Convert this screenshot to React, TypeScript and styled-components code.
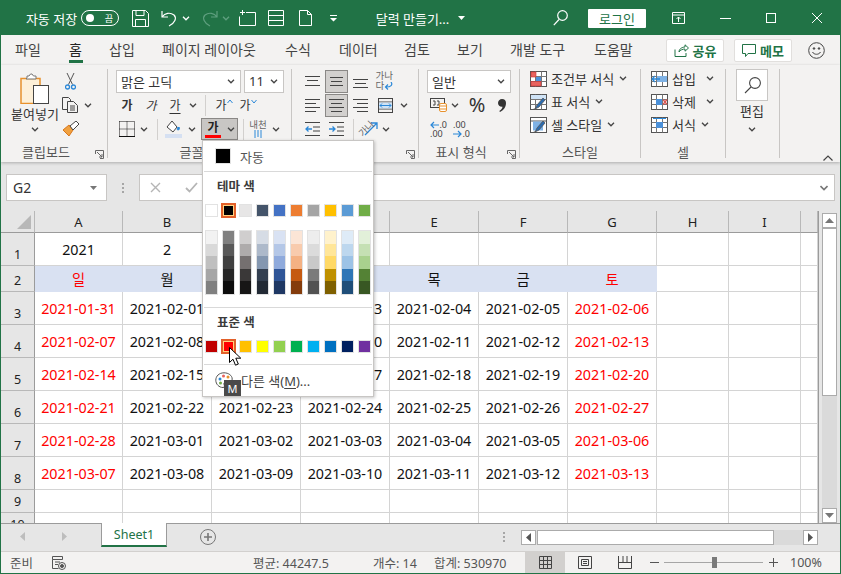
import React from "react";
import styled, { createGlobalStyle } from "styled-components";

const GREEN = "#217346";
const INK = "#444";
const BLUE = "#2b88d8";
const FONT = `"Noto Sans", "Noto Sans CJK KR", sans-serif`;

const COLUMNS = ["A", "B", "C", "D", "E", "F", "G", "H", "I", ""];
const ROW_NUMBERS = [1, 2, 3, 4, 5, 6, 7, 8, 9, 10];
const WEEK_DAYS = ["일", "월", "화", "수", "목", "금", "토"];

const THEME_COLORS = ["#ffffff", "#000000", "#e7e6e6", "#44546a", "#4472c4", "#ed7d31", "#a5a5a5", "#ffc000", "#5b9bd5", "#70ad47"];
const THEME_SHADES = [
  ["#f2f2f2", "#d9d9d9", "#bfbfbf", "#a6a6a6", "#808080"],
  ["#808080", "#595959", "#404040", "#262626", "#0d0d0d"],
  ["#d0cece", "#aeabab", "#757070", "#3a3838", "#171616"],
  ["#d6dce5", "#adb9ca", "#8497b0", "#333f50", "#222a35"],
  ["#d9e2f3", "#b4c7e7", "#8faadc", "#2f5597", "#1f3864"],
  ["#fbe5d6", "#f8cbad", "#f4b183", "#c55a11", "#843c0c"],
  ["#ededed", "#dbdbdb", "#c9c9c9", "#7b7b7b", "#525252"],
  ["#fff2cc", "#ffe699", "#ffd966", "#bf9000", "#7f6000"],
  ["#deebf7", "#bdd7ee", "#9dc3e6", "#2e75b6", "#1f4e79"],
  ["#e2f0d9", "#c5e0b4", "#a9d18e", "#548235", "#385723"],
];
const STANDARD_COLORS = ["#c00000", "#ff0000", "#ffc000", "#ffff00", "#92d050", "#00b050", "#00b0f0", "#0070c0", "#002060", "#7030a0"];

const dateAt = (week: number, day: number) =>
  new Date(Date.UTC(2021, 0, 31 + week * 7 + day)).toISOString().slice(0, 10);

const cellContent = (row: number, col: number): { text: string; red?: boolean; fill?: boolean } => {
  if (row === 1) return { text: col === 0 ? "2021" : col === 1 ? "2" : "" };
  if (row === 2) return col < 7 ? { text: WEEK_DAYS[col], red: col === 0 || col === 6, fill: true } : { text: "" };
  if (row <= 8 && col < 7) return { text: dateAt(row - 3, col), red: col === 0 || col === 6 };
  return { text: "" };
};

const GlobalStyle = createGlobalStyle`
  html, body { margin: 0; padding: 0; background: #fff; }
  * { box-sizing: border-box; }
`;

const Window = styled.div`
  position: relative;
  display: flex;
  flex-direction: column;
  width: 841px;
  height: 574px;
  border: 1px solid ${GREEN};
  overflow: hidden;
  background: #e6e6e6;
  font-family: ${FONT};
  color: ${INK};
`;

/* title bar */
const TitleBar = styled.div`
  display: flex;
  align-items: center;
  flex: none;
  height: 34px;
  background: ${GREEN};
  color: #fff;
  font-size: 13px;
  white-space: nowrap;
`;

const TitleSlot = styled.span<{ $w: number }>`
  display: inline-flex;
  align-items: center;
  justify-content: center;
  flex: none;
  width: ${(p) => p.$w}px;
`;

const Toggle = styled.span`
  position: relative;
  display: inline-flex;
  align-items: center;
  justify-content: flex-end;
  width: 38px;
  height: 16px;
  padding-right: 5px;
  border: 1px solid #fff;
  border-radius: 8px;
  font-size: 9px;
  &::before {
    content: "";
    position: absolute;
    left: 4px;
    top: 3px;
    width: 8px;
    height: 8px;
    border-radius: 50%;
    background: #fff;
  }
`;

const LoginButton = styled.span`
  display: flex;
  align-items: center;
  justify-content: center;
  width: 58px;
  height: 19px;
  background: #fff;
  color: ${GREEN};
  font-size: 13px;
  border-radius: 1px;
`;

/* tabs */
const TabRow = styled.div`
  display: flex;
  align-items: center;
  flex: none;
  height: 30px;
  padding: 0 15px 0 14px;
  background: #f3f2f1;
`;

const TabList = styled.div`
  display: grid;
  grid-template-columns: 54px 40px 53px 123px 54px 65px 53px 53px 84px 50px;
  font-size: 14px;
  line-height: 20px;
`;

const Tab = styled.span<{ $active?: boolean }>`
  position: relative;
  white-space: nowrap;
  color: ${(p) => (p.$active ? "#222" : INK)};
  ${(p) =>
    p.$active &&
    `&::after {
      content: "";
      position: absolute;
      left: 0;
      top: 20px;
      width: 14px;
      height: 3px;
      background: ${GREEN};
    }`}
`;

const TabActions = styled.div`
  display: flex;
  align-items: center;
  gap: 10px;
  margin-left: auto;
`;

const ActionButton = styled.span`
  display: flex;
  align-items: center;
  justify-content: center;
  gap: 4px;
  width: 58px;
  height: 23px;
  background: #fff;
  border: 1px solid #e1dfdd;
  border-radius: 2px;
  color: ${GREEN};
  font-size: 13px;
  font-weight: 700;
`;

const SmileSlot = styled.span`
  display: flex;
  margin-left: 6px;
`;

/* ribbon */
const Ribbon = styled.div`
  position: relative;
  z-index: 1;
  display: flex;
  flex: none;
  height: 97px;
  padding: 4px 0;
  background: #f3f2f1;
  box-shadow: 0 1px 3px rgba(0, 0, 0, 0.25);
`;

const Group = styled.div<{ $w: number }>`
  position: relative;
  display: flex;
  flex-direction: column;
  flex: none;
  width: ${(p) => p.$w}px;
  border-right: 1px solid #c8c6c4;
`;

const GroupBody = styled.div<{ $pl: number }>`
  display: flex;
  flex: none;
  height: 71px;
  padding-left: ${(p) => p.$pl}px;
`;

const Stack = styled.div<{ $mt?: number }>`
  display: flex;
  flex-direction: column;
  margin-top: ${(p) => p.$mt ?? 0}px;
`;

const GroupLabel = styled.div<{ $launcher?: boolean }>`
  height: 18px;
  padding: 3px ${(p) => (p.$launcher ? 16 : 0)}px 0 0;
  text-align: center;
  font-size: 13px;
  line-height: 18px;
  color: #555;
  white-space: nowrap;
`;

const Launcher = styled.span`
  position: absolute;
  right: 3px;
  bottom: -1px;
  display: flex;
`;

const Row = styled.div<{ $h?: number }>`
  display: flex;
  align-items: center;
  flex: none;
  height: ${(p) => p.$h ?? 24}px;
  font-size: 13px;
  white-space: nowrap;
`;

const Cell = styled.span<{ $w: number }>`
  display: inline-flex;
  align-items: center;
  justify-content: center;
  flex: none;
  width: ${(p) => p.$w}px;
  height: 100%;
`;

const Divider = styled.span`
  display: block;
  width: 1px;
  height: 21px;
  background: #d2d0ce;
`;

const ComboBox = styled.span<{ $w: number }>`
  display: flex;
  align-items: center;
  justify-content: space-between;
  width: ${(p) => p.$w}px;
  height: 23px;
  margin-right: 3px;
  padding: 0 5px 0 4px;
  background: #fff;
  border: 1px solid #c8c6c4;
  font-size: 13px;
  color: #333;
`;

const Letter = styled.span<{ $italic?: boolean; $under?: boolean; $bold?: boolean }>`
  font-size: 12px;
  color: #333;
  font-weight: ${(p) => (p.$bold ? 700 : 400)};
  font-style: ${(p) => (p.$italic ? "italic" : "normal")};
  text-decoration: ${(p) => (p.$under ? "underline" : "none")};
  text-underline-offset: 3px;
`;

const ActiveColorButton = styled.span`
  display: flex;
  align-items: center;
  flex: none;
  width: 37px;
  height: 22px;
  padding-left: 3px;
  background: #c8c6c4;
  border: 1px solid #8a8886;
`;

const ColorLetter = styled.span`
  display: flex;
  flex-direction: column;
  align-items: center;
  width: 16px;
  font-size: 12px;
  font-weight: 700;
  line-height: 13px;
  color: #222;
  &::after {
    content: "";
    width: 16px;
    height: 3px;
    margin-top: 1px;
    background: #ff0000;
  }
`;

const ColorChevron = styled.span`
  display: flex;
  margin-left: 6px;
`;

const AlignButton = styled.span<{ $on?: boolean }>`
  display: flex;
  align-items: center;
  justify-content: center;
  width: 23px;
  height: 23px;
  ${(p) => p.$on && "background: #d2d0ce; border: 1px solid #8a8886;"}
`;

const TinyText = styled.span`
  font-size: 9.5px;
  line-height: 10px;
  color: #666;
`;

const WrapIcon = styled.span`
  display: flex;
  flex-direction: column;
  width: 19px;
`;

const WrapLine = styled.span`
  display: flex;
  align-items: center;
  height: 10px;
`;

const OrientText = styled(TinyText)`
  display: block;
  flex: none;
  transform: rotate(-45deg);
  margin-right: -11px;
`;

const OrientIcon = styled.span`
  display: flex;
  align-items: center;
  width: 23px;
`;

const PhoneticIcon = styled.span`
  display: flex;
  flex-direction: column;
  align-items: center;
`;

const Percent = styled.span`
  font-size: 20px;
  line-height: 24px;
  color: #333;
`;

const DecimalIcon = styled.span`
  display: flex;
  flex-direction: column;
  width: 17px;
`;

const DecimalLine = styled.span`
  display: flex;
  align-items: center;
  justify-content: space-between;
  height: 9px;
  font-size: 9px;
  line-height: 9px;
  color: #444;
`;

const StyleItem = styled(Row)<{ $gap?: number }>`
  height: 23px;
  gap: 4px;
  color: #333;
  & > svg:last-child {
    margin-left: ${(p) => p.$gap ?? 1}px;
  }
`;

const PasteLabel = styled.span`
  font-size: 13px;
  line-height: 20px;
  color: #333;
`;

const PasteColumn = styled.div`
  display: flex;
  flex-direction: column;
  align-items: center;
  flex: none;
  width: 52px;
  padding-top: 4px;
`;

const PasteChevron = styled.span`
  display: flex;
  margin-top: 3px;
`;

const SearchBox = styled.span`
  display: flex;
  align-items: center;
  justify-content: center;
  width: 32px;
  height: 32px;
  background: #fff;
  border: 1px solid #c8c6c4;
`;

const EditColumn = styled.div`
  display: flex;
  flex-direction: column;
  align-items: center;
  width: 32px;
  font-size: 13px;
  line-height: 20px;
  color: #333;
`;

const EditChevron = styled.span`
  display: flex;
  margin-top: 6px;
`;

const Collapse = styled.span`
  position: absolute;
  right: 7px;
  bottom: 1px;
  display: flex;
`;

/* formula bar */
const FormulaBar = styled.div`
  display: flex;
  align-items: flex-start;
  flex: none;
  height: 49px;
  padding: 12px 5px 0 5px;
`;

const NameBox = styled.div`
  display: flex;
  align-items: center;
  justify-content: space-between;
  flex: none;
  width: 101px;
  height: 27px;
  padding: 0 9px 0 6px;
  background: #fff;
  border: 1px solid #c8c6c4;
  font-size: 14px;
  color: #333;
`;

const Grip = styled.span`
  display: flex;
  flex-direction: column;
  align-items: center;
  justify-content: center;
  gap: 2px;
  flex: none;
  width: 32px;
  height: 27px;
  & > i {
    display: block;
    width: 2px;
    height: 2px;
    background: #a6a6a6;
  }
`;

const FormulaBox = styled.div`
  display: flex;
  align-items: center;
  flex: 1;
  height: 27px;
  background: #fff;
  border: 1px solid #c8c6c4;
  padding: 0 6px 0 10px;
`;

const FormulaMark = styled.span`
  display: flex;
  width: 35px;
`;

const FormulaExpand = styled.span`
  display: flex;
  margin-left: auto;
`;

/* sheet */
const SheetArea = styled.div`
  display: flex;
  flex: none;
  height: 312px;
`;

const Grid = styled.div`
  display: grid;
  grid-template-columns: 34px 88px repeat(6, 89px) 72px 72px 17px;
  grid-template-rows: 22px 33px 26px repeat(6, 33px) 23px 23px;
  flex: none;
  width: 818px;
  height: 312px;
  overflow: hidden;
  background: #fff;
  border-right: 1px solid #9b9b9b;
`;

const Corner = styled.div`
  position: relative;
  background: #e6e6e6;
  border-right: 1px solid #b8b8b8;
  border-bottom: 1px solid #9b9b9b;
  &::after {
    content: "";
    position: absolute;
    left: 16px;
    top: 4px;
    width: 14px;
    height: 14px;
    background: #b8b8b8;
    clip-path: polygon(100% 0, 100% 100%, 0 100%);
  }
`;

const ColHead = styled.div`
  display: flex;
  align-items: center;
  justify-content: center;
  background: #e6e6e6;
  border-right: 1px solid #b8b8b8;
  border-bottom: 1px solid #9b9b9b;
  font-size: 13px;
  color: #222;
`;

const RowHead = styled.div`
  display: flex;
  align-items: flex-end;
  justify-content: center;
  padding-bottom: 1px;
  background: #e6e6e6;
  border-right: 1px solid #9b9b9b;
  border-bottom: 1px solid #b8b8b8;
  font-size: 12.5px;
  line-height: 18px;
  color: #222;
`;

const DataCell = styled.div<{ $fill?: boolean; $red?: boolean }>`
  display: flex;
  align-items: center;
  justify-content: center;
  overflow: hidden;
  white-space: nowrap;
  font-size: 14.3px;
  color: ${(p) => (p.$red ? "#ff0000" : "#111")};
  background: ${(p) => (p.$fill ? "#d9e1f2" : "#fff")};
  border-right: 1px solid ${(p) => (p.$fill ? "#d9e1f2" : "#d4d4d4")};
  border-bottom: 1px solid ${(p) => (p.$fill ? "#d9e1f2" : "#d4d4d4")};
`;

const VScroll = styled.div`
  display: flex;
  flex-direction: column;
  flex: none;
  width: 15px;
  margin: 2px 0 0 3px;
  background: #dadada;
`;

const ScrollButton = styled.span`
  display: flex;
  align-items: center;
  justify-content: center;
  flex: none;
  width: 15px;
  height: 15px;
  background: #fff;
  border: 1px solid #ababab;
`;

const VThumb = styled.span`
  flex: none;
  height: 168px;
  background: #fff;
  border: 1px solid #ababab;
`;

const VTrack = styled.span`
  flex: 1;
`;

/* sheet tabs */
const SheetBar = styled.div`
  display: flex;
  align-items: flex-start;
  flex: none;
  height: 28px;
  background: #e6e6e6;
  border-top: 1px solid #9b9b9b;
  padding-right: 22px;
`;

const NavArrows = styled.div`
  display: flex;
  align-items: center;
  justify-content: space-around;
  flex: none;
  width: 88px;
  height: 27px;
  padding: 0 3px 2px 0;
`;

const SheetTab = styled.div`
  flex: none;
  width: 66px;
  height: 24px;
  margin: -1px 0 0 12px;
  padding-top: 3px;
  text-align: center;
  background: #fff;
  border: 1px solid #9b9b9b;
  border-top: 0;
  border-bottom: 2px solid ${GREEN};
  font-size: 12.5px;
  line-height: 18px;
  color: ${GREEN};
`;

const AddSheet = styled.span`
  display: flex;
  flex: none;
  margin: 5px 0 0 33px;
`;

const HGrip = styled(Grip)`
  width: 14px;
  height: 27px;
  margin-left: 281px;
  padding-bottom: 1px;
`;

const HScroll = styled.div`
  display: flex;
  flex: 1;
  height: 15px;
  margin: 6px 0 0 10px;
  background: #dadada;
`;

const HThumb = styled.span`
  flex: none;
  width: 237px;
  margin-left: 1px;
  background: #fff;
  border: 1px solid #ababab;
`;

/* status bar */
const StatusBar = styled.div`
  display: grid;
  grid-template-columns: 42px 201px 120px 61px 91px 40px 40px 40px 1fr;
  align-items: center;
  flex: none;
  height: 22px;
  padding-left: 9px;
  background: #f3f2f1;
  border-top: 1px solid #d2d0ce;
  font-size: 12.5px;
  color: #555;
  white-space: nowrap;
`;

const ViewButton = styled.span<{ $on?: boolean }>`
  display: flex;
  align-items: center;
  justify-content: center;
  height: 21px;
  background: ${(p) => (p.$on ? "#d2d0ce" : "transparent")};
`;

const Zoomer = styled.div`
  display: flex;
  align-items: center;
  padding-left: 5px;
`;

const SliderTrack = styled.span`
  position: relative;
  width: 99px;
  height: 1px;
  margin: 0 6px 0 5px;
  background: #a6a6a6;
  &::after {
    content: "";
    position: absolute;
    left: 48px;
    top: -5px;
    width: 5px;
    height: 11px;
    background: #7a7a7a;
  }
`;

const ZoomValue = styled.span`
  margin-left: 12px;
`;

/* colour menu, lies over the ribbon and the sheet */
const ColorMenu = styled.div`
  position: absolute;
  z-index: 5;
  left: 201px;
  top: 139px;
  width: 172px;
  height: 257px;
  background: #fff;
  border: 1px solid #c8c6c4;
  box-shadow: 1px 1px 3px rgba(0, 0, 0, 0.22);
`;

const MenuRow = styled.div`
  display: flex;
  align-items: center;
  height: 30px;
  padding-left: 12px;
  font-size: 13px;
  color: #555;
`;

const AutoSwatch = styled.span`
  display: block;
  width: 16px;
  height: 16px;
  margin-right: 9px;
  background: #000;
  border: 1px solid #e2e2e2;
`;

const MenuRule = styled.div<{ $mt?: number }>`
  height: 1px;
  margin: ${(p) => p.$mt ?? 0}px 1px 0;
  background: #d9d9d9;
`;

const MenuHeading = styled.div`
  height: 30px;
  margin-bottom: 2px;
  padding-left: 14px;
  font-size: 12.5px;
  font-weight: 700;
  line-height: 30px;
  color: #3b3b3b;
`;

const SwatchRow = styled.div`
  display: grid;
  grid-template-columns: repeat(10, 13px);
  column-gap: 4px;
  padding-left: 2px;
`;

const Swatch = styled.span<{ $color: string; $picked?: boolean }>`
  display: block;
  height: 13px;
  background: ${(p) => p.$color};
  border: 1px solid ${(p) => (p.$picked ? "#e2602a" : "#e2e2e2")};
  ${(p) => p.$picked && "box-shadow: inset 0 0 0 1px #ffd27f; outline: 1px solid #e2602a;"}
`;

const ShadeGrid = styled(SwatchRow)`
  margin-top: 13px;
`;

const ShadeColumn = styled.span`
  display: flex;
  flex-direction: column;
  height: 65px;
  border: 1px solid #e2e2e2;
`;

const Shade = styled.span<{ $color: string }>`
  flex: 1;
  background: ${(p) => p.$color};
`;

const MoreRow = styled(MenuRow)`
  gap: 8px;
  color: #444;
`;

const MoreText = styled.span`
  & > u {
    text-underline-offset: 2px;
  }
`;

const KeyTip = styled.span`
  position: absolute;
  left: 21px;
  top: 239px;
  display: flex;
  align-items: center;
  justify-content: center;
  width: 17px;
  height: 16px;
  background: #4a4a4a;
  color: #fff;
  font-size: 11px;
`;

const Pointer = styled.svg`
  position: absolute;
  left: 26px;
  top: 206px;
`;

/* icons */
const Chevron = ({ color = INK }: { color?: string }) => (
  <svg width="8" height="5" viewBox="0 0 8 5" fill="none" stroke={color} strokeWidth="1.3">
    <path d="M1 .8l3 3 3-3" />
  </svg>
);

const AlignLines = ({ lines }: { lines: [number, number, number][] }) => (
  <svg width="15" height="17" viewBox="0 0 15 17" stroke="#444" strokeWidth="1">
    {lines.map(([a, b, y]) => (
      <path key={y} d={`M${a} ${y + 0.5}H${b}`} />
    ))}
  </svg>
);

const TableBase = ({ children, lines = true }: { children?: React.ReactNode; lines?: boolean }) => (
  <svg width="17" height="16" viewBox="0 0 17 16" fill="none">
    <rect x=".5" y=".5" width="16" height="15" fill="#fff" stroke="#555" />
    {lines && <path d="M.5 5.5h16M.5 10.5h16M5.5 .5v15M11.5 .5v15" stroke="#777" />}
    {children}
  </svg>
);

const LauncherIcon = () => (
  <svg width="9" height="9" viewBox="0 0 9 9" fill="none" stroke="#666">
    <path d="M.5 4V.5h8v8H5M2 2l5 5M4 7h3V4" />
  </svg>
);

const Brush = () => <path d="M5 15l2-4 6-7 2 2-6 7zM3 15.500l3-1" fill="#2b6cb0" stroke="#555" strokeWidth=".8" />;

const Dot = () => <i />;

export default function App() {
  return (
    <>
      <GlobalStyle />
      <Window>
        <TitleBar>
          <TitleSlot $w={21} />
          <TitleSlot $w={59}>자동 저장</TitleSlot>
          <Toggle>끔</Toggle>
          <TitleSlot $w={13} />
          <TitleSlot $w={17}>
            <svg width="17" height="17" viewBox="0 0 17 17" fill="none" stroke="#fff">
              <path d="M.5.5h13l3 3v13H.5zM4 .5v5h8v-5M3.500 16.500v-7h10v7" />
            </svg>
          </TitleSlot>
          <TitleSlot $w={12} />
          <TitleSlot $w={17}>
            <svg width="17" height="17" viewBox="0 0 17 17" fill="none" stroke="#fff" strokeWidth="1.2">
              <path d="M1 1v6h6M1 7c3-4 8-5 12-2 3 3 1 8-5 11" />
            </svg>
          </TitleSlot>
          <TitleSlot $w={16}>
            <Chevron color="#fff" />
          </TitleSlot>
          <TitleSlot $w={7} />
          <TitleSlot $w={17}>
            <svg width="17" height="17" viewBox="0 0 17 17" fill="none" stroke="#5f9f7f" strokeWidth="1.2">
              <path d="M16 1v6h-6M16 7c-3-4-8-5-12-2-3 3-1 8 5 11" />
            </svg>
          </TitleSlot>
          <TitleSlot $w={15}>
            <Chevron color="#5f9f7f" />
          </TitleSlot>
          <TitleSlot $w={6} />
          <TitleSlot $w={17}>
            <svg width="17" height="16" viewBox="0 0 17 16" fill="none" stroke="#fff">
              <path d="M7 2.500h9.500v13H.5v-9M3.500 0v5M1 2.500h5" />
            </svg>
          </TitleSlot>
          <TitleSlot $w={12} />
          <TitleSlot $w={17}>
            <svg width="17" height="16" viewBox="0 0 17 16" fill="none" stroke="#fff">
              <path d="M.5.500h15v15H.5zM.5 5.500h15M.5 10.500h15" />
            </svg>
          </TitleSlot>
          <TitleSlot $w={14} />
          <TitleSlot $w={13}>
            <svg width="13" height="16" viewBox="0 0 13 16" fill="none" stroke="#fff">
              <path d="M.5.500h8l4 4v11H.5zM8.500.500v4h4" />
            </svg>
          </TitleSlot>
          <TitleSlot $w={18} />
          <TitleSlot $w={7}>
            <svg width="7" height="7" viewBox="0 0 7 7" fill="#fff">
              <path d="M0 0h7v1H0zM0 3h7L3.500 6.500z" />
            </svg>
          </TitleSlot>
          <TitleSlot $w={38} />
          <TitleSlot $w={75}>달력 만들기...</TitleSlot>
          <TitleSlot $w={23}>
            <svg width="7" height="4" viewBox="0 0 7 4" fill="#fff">
              <path d="M0 0h7L3.500 4z" />
            </svg>
          </TitleSlot>
          <TitleSlot $w={80} />
          <TitleSlot $w={15}>
            <svg width="15" height="16" viewBox="0 0 15 16" fill="none" stroke="#fff" strokeWidth="1.2">
              <circle cx="9.500" cy="5.500" r="4.800" />
              <path d="M6 9.500L.8 15.200" />
            </svg>
          </TitleSlot>
          <TitleSlot $w={20} />
          <LoginButton>로그인</LoginButton>
          <TitleSlot $w={26} />
          <TitleSlot $w={13}>
            <svg width="13" height="12" viewBox="0 0 13 12" fill="none" stroke="#fff">
              <path d="M.5.500h12v11H.5zM.5 3h12M6.500 10V5M4.500 7l2-2 2 2" />
            </svg>
          </TitleSlot>
          <TitleSlot $w={35} />
          <TitleSlot $w={11}>
            <svg width="11" height="1">
              <rect width="11" height="1" fill="#fff" />
            </svg>
          </TitleSlot>
          <TitleSlot $w={35} />
          <TitleSlot $w={10}>
            <svg width="10" height="10" viewBox="0 0 10 10" fill="none" stroke="#fff">
              <rect x=".5" y=".5" width="9" height="9" />
            </svg>
          </TitleSlot>
          <TitleSlot $w={36} />
          <TitleSlot $w={10}>
            <svg width="10" height="10" viewBox="0 0 10 10" fill="none" stroke="#fff">
              <path d="M0 0l10 10M10 0L0 10" />
            </svg>
          </TitleSlot>
        </TitleBar>

        <TabRow>
          <TabList>
            <Tab>파일</Tab>
            <Tab $active>홈</Tab>
            <Tab>삽입</Tab>
            <Tab>페이지 레이아웃</Tab>
            <Tab>수식</Tab>
            <Tab>데이터</Tab>
            <Tab>검토</Tab>
            <Tab>보기</Tab>
            <Tab>개발 도구</Tab>
            <Tab>도움말</Tab>
          </TabList>
          <TabActions>
            <ActionButton>
              <svg width="15" height="13" viewBox="0 0 15 13" fill="none" stroke={GREEN}>
                <path d="M1 5.500V12.500h11V9M5 8c0-3 3-5 6-5V.8L14.500 4 11 7.200V5C8.500 5 6.500 6 5 8z" />
              </svg>
              공유
            </ActionButton>
            <ActionButton>
              <svg width="14" height="13" viewBox="0 0 14 13" fill="none" stroke={GREEN}>
                <path d="M.5.500h13v9H6L3.500 12.500v-3h-3z" />
              </svg>
              메모
            </ActionButton>
            <SmileSlot>
              <svg width="17" height="17" viewBox="0 0 17 17" fill="none" stroke="#444">
                <circle cx="8.500" cy="8.500" r="7.800" />
                <path d="M4.500 10c1.500 3 6.500 3 8 0" />
                <circle cx="6" cy="6.500" r=".8" fill="#444" />
                <circle cx="11" cy="6.500" r=".8" fill="#444" />
              </svg>
            </SmileSlot>
          </TabActions>
        </TabRow>

        <Ribbon>
          <Group $w={107}>
            <GroupBody $pl={8}>
              <PasteColumn>
                <svg width="30" height="31" viewBox="0 0 30 31" fill="none">
                  <path d="M1 5.500h19v25H1z" fill="#fdf0d8" stroke="#e8912d" strokeWidth="1.500" />
                  <path d="M7 5V3h2l1.500-2H12l1.500 2H16v3H6z" fill="#fff" stroke="#777" />
                  <rect x="13.500" y="12.500" width="15" height="18" fill="#fff" stroke="#444" />
                </svg>
                <PasteLabel>붙여넣기</PasteLabel>
                <PasteChevron>
                  <Chevron />
                </PasteChevron>
              </PasteColumn>
              <Stack>
                <Row>
                  <Cell $w={18}>
                    <svg width="11" height="17" viewBox="0 0 11 17" fill="none">
                      <path d="M2 0l5.500 11.500M9 0L3.500 11.500" stroke="#555" />
                      <circle cx="2.500" cy="14" r="2" stroke={BLUE} strokeWidth="1.300" />
                      <circle cx="8.500" cy="14" r="2" stroke={BLUE} strokeWidth="1.300" />
                    </svg>
                  </Cell>
                </Row>
                <Row>
                  <Cell $w={18}>
                    <svg width="17" height="16" viewBox="0 0 17 16" fill="none" stroke="#444">
                      <path d="M5.500 12.500h-5V.5h6l2 2v2" />
                      <path d="M5.500 4.500h6l4 4v7h-10zM8 9h5M8 11h5M8 13h5" />
                    </svg>
                  </Cell>
                  <Cell $w={17}>
                    <Chevron />
                  </Cell>
                </Row>
                <Row>
                  <Cell $w={18}>
                    <svg width="17" height="16" viewBox="0 0 17 16" fill="none">
                      <path d="M1 9l6-5 4 5-4 6z" fill="#f0a140" stroke="#d8761a" />
                      <path d="M8 5l6-5 3 3-6 6z" fill="#fff" stroke="#444" />
                    </svg>
                  </Cell>
                </Row>
              </Stack>
            </GroupBody>
            <GroupLabel $launcher>클립보드</GroupLabel>
            <Launcher>
              <LauncherIcon />
            </Launcher>
          </Group>

          <Group $w={184}>
            <GroupBody $pl={8}>
              <Stack>
                <Row>
                  <ComboBox $w={125}>
                    맑은 고딕
                    <Chevron />
                  </ComboBox>
                  <ComboBox $w={40}>
                    11
                    <Chevron />
                  </ComboBox>
                </Row>
                <Row>
                  <Cell $w={22}>
                    <Letter $bold>가</Letter>
                  </Cell>
                  <Cell $w={26}>
                    <Letter $italic>가</Letter>
                  </Cell>
                  <Cell $w={22}>
                    <Letter $under>가</Letter>
                  </Cell>
                  <Cell $w={13}>
                    <Chevron />
                  </Cell>
                  <Cell $w={13}>
                    <Divider />
                  </Cell>
                  <Cell $w={24}>
                    <Letter>가</Letter>
                    <svg width="6" height="12" viewBox="0 0 6 12" fill="none" stroke={BLUE}>
                      <path d="M.5 4l2.500-3 2.500 3" />
                    </svg>
                  </Cell>
                  <Cell $w={24}>
                    <Letter>가</Letter>
                    <svg width="6" height="12" viewBox="0 0 6 12" fill="none" stroke={BLUE}>
                      <path d="M.5 1l2.500 3 2.500-3" />
                    </svg>
                  </Cell>
                </Row>
                <Row>
                  <Cell $w={22}>
                    <svg width="16" height="16" viewBox="0 0 16 16" fill="none" stroke="#111" strokeDasharray="1 1">
                      <path d="M.5 .5h15v15M.5 .5v15M8 .5v15M.5 8h15" />
                      <path d="M0 15.500h16" strokeDasharray="none" />
                    </svg>
                  </Cell>
                  <Cell $w={12}>
                    <Chevron />
                  </Cell>
                  <Cell $w={14}>
                    <Divider />
                  </Cell>
                  <Cell $w={18}>
                    <svg width="17" height="18" viewBox="0 0 17 18" fill="none">
                      <path d="M2 7l5-6 5 6-4 5z" fill="#fff" stroke="#444" />
                      <path d="M13 7c-1 2-1 3 0 3s2-1 1-3" fill={BLUE} stroke={BLUE} />
                      <rect x="0" y="14" width="17" height="4" fill="#d5e0f2" />
                    </svg>
                  </Cell>
                  <Cell $w={19}>
                    <Chevron />
                  </Cell>
                  <ActiveColorButton>
                    <ColorLetter>가</ColorLetter>
                    <ColorChevron>
                      <Chevron />
                    </ColorChevron>
                  </ActiveColorButton>
                  <Cell $w={10}>
                    <Divider />
                  </Cell>
                  <Cell $w={20}>
                    <PhoneticIcon>
                      <TinyText>내천</TinyText>
                      <svg width="8" height="8" viewBox="0 0 8 8" fill="none" stroke={BLUE}>
                        <path d="M1 0v8M4 0v7M7 0v8" />
                      </svg>
                    </PhoneticIcon>
                  </Cell>
                  <Cell $w={15}>
                    <Chevron />
                  </Cell>
                </Row>
              </Stack>
            </GroupBody>
            <GroupLabel $launcher>글꼴</GroupLabel>
          </Group>

          <Group $w={127}>
            <GroupBody $pl={8}>
              <Stack>
                <Row>
                  <Cell $w={24}>
                    <AlignLines lines={[[0, 15, 3], [2, 13, 7], [0, 15, 12]]} />
                  </Cell>
                  <Cell $w={24}>
                    <AlignButton $on>
                      <AlignLines lines={[[1, 14, 4], [2, 13, 8], [1, 14, 12]]} />
                    </AlignButton>
                  </Cell>
                  <Cell $w={24}>
                    <AlignLines lines={[[0, 15, 6], [2, 13, 10], [0, 15, 14]]} />
                  </Cell>
                  <Cell $w={26}>
                    <WrapIcon>
                      <WrapLine>
                        <TinyText>가나</TinyText>
                      </WrapLine>
                      <WrapLine>
                        <TinyText>다</TinyText>
                        <svg width="9" height="8" viewBox="0 0 9 8" fill="none" stroke={BLUE} strokeWidth="1.200">
                          <path d="M7 0c2 3 0 5-5 5M4 2.500L1.500 5 4 7.500" />
                        </svg>
                      </WrapLine>
                    </WrapIcon>
                  </Cell>
                </Row>
                <Row>
                  <Cell $w={24}>
                    <AlignLines lines={[[0, 15, 2], [0, 11, 6], [0, 15, 10], [0, 11, 14]]} />
                  </Cell>
                  <Cell $w={24}>
                    <AlignButton $on>
                      <AlignLines lines={[[0, 15, 2], [2, 13, 6], [0, 15, 10], [2, 13, 14]]} />
                    </AlignButton>
                  </Cell>
                  <Cell $w={24}>
                    <AlignLines lines={[[0, 15, 2], [4, 15, 6], [0, 15, 10], [4, 15, 14]]} />
                  </Cell>
                  <Cell $w={26}>
                    <svg width="15" height="15" viewBox="0 0 15 15" fill="none">
                      <rect x=".5" y=".5" width="14" height="14" stroke="#444" />
                      <path d="M.5 4h14M.5 11h14" stroke="#444" />
                      <rect x="1" y="4.500" width="13" height="6" fill="#cfe3f6" />
                      <path d="M2 7.500h11M4 5.500l-2 2 2 2M11 5.500l2 2-2 2" stroke={BLUE} />
                    </svg>
                  </Cell>
                  <Cell $w={12}>
                    <Chevron />
                  </Cell>
                </Row>
                <Row>
                  <Cell $w={24}>
                    <svg width="15" height="14" viewBox="0 0 15 14" fill="none">
                      <path d="M0 .5h15M8 5h7M8 9h7M0 13.500h15" stroke="#444" />
                      <path d="M7 7H1M3.500 4.500L1 7l2.500 2.500" stroke={BLUE} strokeWidth="1.300" />
                    </svg>
                  </Cell>
                  <Cell $w={24}>
                    <svg width="15" height="14" viewBox="0 0 15 14" fill="none">
                      <path d="M0 .5h15M8 5h7M8 9h7M0 13.500h15" stroke="#444" />
                      <path d="M0 7h6M3.500 4.500L6 7 3.500 9.500" stroke={BLUE} strokeWidth="1.300" />
                    </svg>
                  </Cell>
                  <Cell $w={10}>
                    <Divider />
                  </Cell>
                  <Cell $w={23}>
                    <OrientIcon>
                      <OrientText>가나</OrientText>
                      <svg width="14" height="14" viewBox="0 0 14 14" fill="none" stroke={BLUE} strokeWidth="1.300">
                        <path d="M1 13L13 1M7 1h6v6" />
                      </svg>
                    </OrientIcon>
                  </Cell>
                  <Cell $w={10}>
                    <Chevron />
                  </Cell>
                </Row>
              </Stack>
            </GroupBody>
            <GroupLabel $launcher>맞춤</GroupLabel>
            <Launcher>
              <LauncherIcon />
            </Launcher>
          </Group>

          <Group $w={101}>
            <GroupBody $pl={8}>
              <Stack>
                <Row>
                  <ComboBox $w={84}>
                    일반
                    <Chevron />
                  </ComboBox>
                </Row>
                <Row>
                  <Cell $w={22}>
                    <svg width="17" height="14" viewBox="0 0 17 14" fill="none">
                      <rect x=".5" y=".5" width="14" height="9" stroke="#444" />
                      <path d="M3 3h2v4H3M7 3h2v4H7" stroke="#444" />
                      <rect x="9.500" y="5.500" width="7" height="8" rx="1.500" fill="#fff" stroke="#e8912d" />
                      <path d="M10 8h6M10 11h6" stroke="#e8912d" />
                    </svg>
                  </Cell>
                  <Cell $w={12}>
                    <Chevron />
                  </Cell>
                  <Cell $w={32}>
                    <Percent>%</Percent>
                  </Cell>
                  <Cell $w={18}>
                    <svg width="8" height="13" viewBox="0 0 8 13">
                      <path d="M4 0c2.500 0 4 1.500 4 4 0 4-2.500 7.500-6 9l-.7-1c2-1.200 3-2.500 3.200-4.300C2 8 0 6.300 0 4c0-2.300 1.800-4 4-4z" fill="#333" />
                    </svg>
                  </Cell>
                </Row>
                <Row>
                  <Cell $w={23}>
                    <DecimalIcon>
                      <DecimalLine>
                        <svg width="9" height="8" viewBox="0 0 9 8" fill="none" stroke={BLUE} strokeWidth="1.200">
                          <path d="M9 4H1M4 1L1 4l3 3" />
                        </svg>
                        .0
                      </DecimalLine>
                      <DecimalLine>.00</DecimalLine>
                    </DecimalIcon>
                  </Cell>
                  <Cell $w={23}>
                    <DecimalIcon>
                      <DecimalLine>.00</DecimalLine>
                      <DecimalLine>
                        <svg width="9" height="8" viewBox="0 0 9 8" fill="none" stroke={BLUE} strokeWidth="1.200">
                          <path d="M0 4h8M5 1l3 3-3 3" />
                        </svg>
                        .0
                      </DecimalLine>
                    </DecimalIcon>
                  </Cell>
                </Row>
              </Stack>
            </GroupBody>
            <GroupLabel $launcher>표시 형식</GroupLabel>
            <Launcher>
              <LauncherIcon />
            </Launcher>
          </Group>

          <Group $w={121}>
            <GroupBody $pl={10}>
              <Stack $mt={-2}>
                <StyleItem>
                  <TableBase>
                    <rect x="1" y="1" width="5" height="5" fill="#e8635f" stroke="#c33" strokeWidth=".6" />
                    <rect x="6" y="6" width="5" height="4" fill="#4a90d9" />
                    <rect x="1" y="10.500" width="10" height="4.500" fill="#e8635f" stroke="#c33" strokeWidth=".6" />
                  </TableBase>
                  조건부 서식
                  <Chevron />
                </StyleItem>
                <StyleItem>
                  <TableBase>
                    <rect x="1" y="1" width="15" height="4" fill="#cfe3f6" />
                    <Brush />
                  </TableBase>
                  표 서식
                  <Chevron />
                </StyleItem>
                <StyleItem>
                  <TableBase lines={false}>
                    <path d="M.5 4h16" stroke="#555" />
                    <rect x="3" y="4.500" width="10" height="9" fill="#7fb2e5" />
                    <Brush />
                  </TableBase>
                  셀 스타일
                  <Chevron />
                </StyleItem>
              </Stack>
            </GroupBody>
            <GroupLabel>스타일</GroupLabel>
          </Group>

          <Group $w={85}>
            <GroupBody $pl={10}>
              <Stack $mt={-2}>
                <StyleItem $gap={6}>
                  <TableBase>
                    <rect x="6" y="5" width="10" height="6" fill="#7fb2e5" />
                    <path d="M9 8H1M4 5L1 8l3 3" stroke={BLUE} strokeWidth="1.300" />
                  </TableBase>
                  삽입
                  <Chevron />
                </StyleItem>
                <StyleItem $gap={6}>
                  <TableBase>
                    <rect x="5" y="5" width="6" height="6" fill="#4a90d9" />
                    <path d="M12 5.500l4 5M16 5.500l-4 5" stroke="#d9534f" strokeWidth="1.300" />
                  </TableBase>
                  삭제
                  <Chevron />
                </StyleItem>
                <StyleItem>
                  <TableBase>
                    <rect x="5" y="5" width="7" height="6" fill="#4a90d9" />
                    <path d="M2 1.500h13" stroke={BLUE} />
                  </TableBase>
                  서식
                  <Chevron />
                </StyleItem>
              </Stack>
            </GroupBody>
            <GroupLabel>셀</GroupLabel>
          </Group>

          <Group $w={54}>
            <GroupBody $pl={10}>
              <EditColumn>
                <SearchBox>
                  <svg width="17" height="17" viewBox="0 0 17 17" fill="none" stroke="#444" strokeWidth="1.100">
                    <circle cx="11" cy="6" r="5.400" />
                    <path d="M7 10l-6 6" />
                  </svg>
                </SearchBox>
                <span>편집</span>
                <EditChevron>
                  <Chevron />
                </EditChevron>
              </EditColumn>
            </GroupBody>
          </Group>

          <Collapse>
            <svg width="10" height="6" viewBox="0 0 10 6" fill="none" stroke="#444" strokeWidth="1.200">
              <path d="M.5 5.500L5 1l4.500 4.500" />
            </svg>
          </Collapse>
        </Ribbon>

        <FormulaBar>
          <NameBox>
            G2
            <svg width="7" height="4" viewBox="0 0 7 4" fill="#777">
              <path d="M0 0h7L3.500 4z" />
            </svg>
          </NameBox>
          <Grip>
            <Dot />
            <Dot />
            <Dot />
          </Grip>
          <FormulaBox>
            <FormulaMark>
              <svg width="11" height="11" viewBox="0 0 11 11" fill="none" stroke="#b5b5b5" strokeWidth="1.400">
                <path d="M1 1l9 9M10 1l-9 9" />
              </svg>
            </FormulaMark>
            <FormulaMark>
              <svg width="13" height="11" viewBox="0 0 13 11" fill="none" stroke="#b5b5b5" strokeWidth="1.800">
                <path d="M1 6l3.500 3.500L12 1" />
              </svg>
            </FormulaMark>
            <FormulaExpand>
              <svg width="8" height="6" viewBox="0 0 8 6" fill="none" stroke="#777" strokeWidth="1.600">
                <path d="M.5 1l3.500 3.500L7.500 1" />
              </svg>
            </FormulaExpand>
          </FormulaBox>
        </FormulaBar>

        <SheetArea>
          <Grid>
            <Corner />
            {COLUMNS.map((c, i) => (
              <ColHead key={i}>{c}</ColHead>
            ))}
            {ROW_NUMBERS.map((row) => (
              <React.Fragment key={row}>
                <RowHead>{row}</RowHead>
                {COLUMNS.map((_, col) => {
                  const { text, red, fill } = cellContent(row, col);
                  return (
                    <DataCell key={col} $red={red} $fill={fill}>
                      {text}
                    </DataCell>
                  );
                })}
              </React.Fragment>
            ))}
          </Grid>
          <VScroll>
            <ScrollButton>
              <svg width="9" height="5" viewBox="0 0 9 5" fill="#777">
                <path d="M4.500 0L9 5H0z" />
              </svg>
            </ScrollButton>
            <VThumb />
            <VTrack />
            <ScrollButton>
              <svg width="9" height="5" viewBox="0 0 9 5" fill="#777">
                <path d="M0 0h9L4.500 5z" />
              </svg>
            </ScrollButton>
          </VScroll>
        </SheetArea>

        <SheetBar>
          <NavArrows>
            <svg width="5" height="9" viewBox="0 0 5 9" fill="#bdbdbd">
              <path d="M5 0v9L0 4.500z" />
            </svg>
            <svg width="5" height="9" viewBox="0 0 5 9" fill="#bdbdbd">
              <path d="M0 0v9l5-4.500z" />
            </svg>
          </NavArrows>
          <SheetTab>Sheet1</SheetTab>
          <AddSheet>
            <svg width="16" height="16" viewBox="0 0 16 16" fill="none" stroke="#777">
              <circle cx="8" cy="8" r="7.500" />
              <path d="M4 8h8M8 4v8" strokeWidth="1.600" />
            </svg>
          </AddSheet>
          <HGrip>
            <Dot />
            <Dot />
            <Dot />
          </HGrip>
          <HScroll>
            <ScrollButton>
              <svg width="5" height="9" viewBox="0 0 5 9" fill="#555">
                <path d="M5 0v9L0 4.500z" />
              </svg>
            </ScrollButton>
            <HThumb />
            <VTrack />
            <ScrollButton>
              <svg width="5" height="9" viewBox="0 0 5 9" fill="#555">
                <path d="M0 0v9l5-4.500z" />
              </svg>
            </ScrollButton>
          </HScroll>
        </SheetBar>

        <StatusBar>
          <span>준비</span>
          <svg width="14" height="14" viewBox="0 0 14 14" fill="none" stroke="#555">
            <path d="M.5.500h10v3H.5zM.5 3.500v9h6M3 6h5M3 8.500h3" />
            <circle cx="10" cy="10" r="3.500" />
            <circle cx="10" cy="10" r="1.500" fill="#555" />
          </svg>
          <span>평균: 44247.5</span>
          <span>개수: 14</span>
          <span>합계: 530970</span>
          <ViewButton $on>
            <svg width="13" height="13" viewBox="0 0 13 13" fill="none" stroke="#444">
              <path d="M.5.500h12v12H.5zM4.500.500v12M8.500.500v12M.5 4.500h12M.5 8.500h12" />
            </svg>
          </ViewButton>
          <ViewButton>
            <svg width="14" height="13" viewBox="0 0 14 13" fill="none" stroke="#444">
              <path d="M.5.500h13v12H.5zM3.500 3.500h7v6h-7zM5 5.500h4M5 7.500h4" />
            </svg>
          </ViewButton>
          <ViewButton>
            <svg width="14" height="13" viewBox="0 0 14 13" fill="none" stroke="#444">
              <path d="M.5 0v12.500h13V0M.5 6.500h13M5 0v6.500M9 0v6.500" />
            </svg>
          </ViewButton>
          <Zoomer>
            <svg width="9" height="1">
              <rect width="9" height="1" fill="#555" />
            </svg>
            <SliderTrack />
            <svg width="9" height="9" viewBox="0 0 9 9" stroke="#555">
              <path d="M0 4.500h9M4.500 0v9" />
            </svg>
            <ZoomValue>100%</ZoomValue>
          </Zoomer>
        </StatusBar>

        <ColorMenu>
          <MenuRow>
            <AutoSwatch />
            자동
          </MenuRow>
          <MenuRule />
          <MenuHeading>테마 색</MenuHeading>
          <SwatchRow>
            {THEME_COLORS.map((c, i) => (
              <Swatch key={c} $color={c} $picked={i === 1} />
            ))}
          </SwatchRow>
          <ShadeGrid>
            {THEME_SHADES.map((column, i) => (
              <ShadeColumn key={i}>
                {column.map((c) => (
                  <Shade key={c} $color={c} />
                ))}
              </ShadeColumn>
            ))}
          </ShadeGrid>
          <MenuRule $mt={12} />
          <MenuHeading>표준 색</MenuHeading>
          <SwatchRow>
            {STANDARD_COLORS.map((c, i) => (
              <Swatch key={c} $color={c} $picked={i === 1} />
            ))}
          </SwatchRow>
          <MenuRule $mt={11} />
          <MoreRow>
            <svg width="18" height="17" viewBox="0 0 18 17" fill="none">
              <path d="M9 .8C4 .8.8 4.200.8 8.200S4 15.500 8 15.500c2 0 1.500-2 1-3-.5-1.500.5-2.500 2-2.300 3 .5 6.200-.5 6.200-3.200C17.200 3.500 13.500.8 9 .8z" stroke="#555" fill="#fff" />
              <circle cx="5" cy="7" r="1.500" fill="#2b88d8" />
              <circle cx="8.500" cy="4" r="1.500" fill="#e8635f" />
              <circle cx="13" cy="5" r="1.500" fill="#e8912d" />
              <circle cx="5.500" cy="11" r="1.500" fill="#70ad47" />
            </svg>
            <MoreText>
              다른 색(<u>M</u>)...
            </MoreText>
          </MoreRow>
          <KeyTip>M</KeyTip>
          <Pointer width="13" height="19" viewBox="0 0 13 19">
            <path d="M.5.500v15l3.500-3.300 2.500 6 2.800-1.200-2.500-5.800h5z" fill="#fff" stroke="#000" />
          </Pointer>
        </ColorMenu>
      </Window>
    </>
  );
}
